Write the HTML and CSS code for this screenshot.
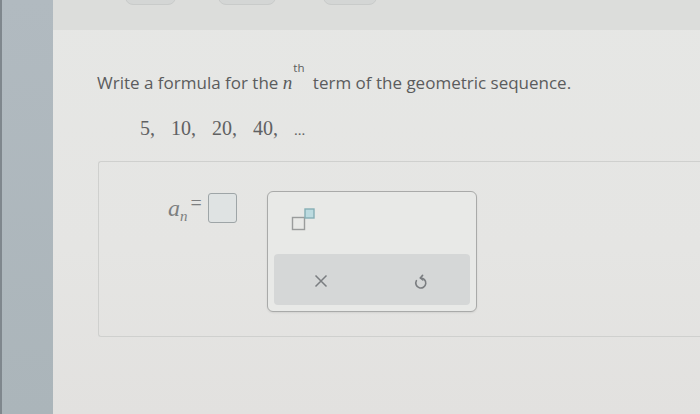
FILE: index.html
```html
<!DOCTYPE html>
<html>
<head>
<meta charset="utf-8">
<link rel="stylesheet" href="styles.css">
</head>
<body>
<div class="screen">
  <div class="side"></div>
  <div class="main">
    <div class="topbar">
      <span class="tab tab1"></span>
      <span class="tab tab2"></span>
      <span class="tab tab3"></span>
    </div>
    <div class="content">
      <p class="question">Write a formula for the <span class="var">n</span><span class="th">th</span> term of the geometric sequence.</p>
      <p class="seq">5,&nbsp; 10,&nbsp; 20,&nbsp; 40,&nbsp; <span class="dots">...</span></p>
      <div class="answer">
        <div class="formula">
          <span class="a">a</span><span class="sub">n</span><span class="eq">=</span><span class="slot"></span>
        </div>
        <div class="keypad">
          <div class="keyrow">
            <svg class="sup-icon" width="26" height="24" viewBox="0 0 26 24">
              <rect x="1.5" y="9.5" width="12" height="12" fill="none" stroke="#9a9c9c" stroke-width="1.4"/>
              <rect x="14" y="1" width="9" height="9" fill="#bcdbe0" stroke="#86aeb5" stroke-width="1.4"/>
            </svg>
          </div>
          <div class="actions">
            <svg class="icon" width="14" height="14" viewBox="0 0 14 14">
              <path d="M1.5 1.5 L12.5 12.5 M12.5 1.5 L1.5 12.5" stroke="#7a7d80" stroke-width="1.5" fill="none"/>
            </svg>
            <svg class="icon" width="14" height="18" viewBox="0 0 14 18">
              <path d="M6.5 6 A5 5 0 1 1 2.4 8.6" stroke="#7a7d80" stroke-width="1.6" fill="none" stroke-linecap="round"/>
              <path d="M8.6 3.4 L6.3 6 L8.8 8" stroke="#7a7d80" stroke-width="1.6" fill="none" stroke-linecap="round" stroke-linejoin="round"/>
            </svg>
          </div>
        </div>
      </div>
    </div>
  </div>
</div>
</body>
</html>
```

FILE: styles.css
```css
html, body {
  margin: 0;
  padding: 0;
}
body {
  width: 700px;
  height: 414px;
  overflow: hidden;
  background: #e4e4e2;
}
.screen {
  display: flex;
  width: 700px;
  height: 414px;
}
.side {
  width: 51px;
  flex: none;
  background: linear-gradient(180deg, #b1bac0 0%, #abb5ba 100%);
  border-left: 2px solid #7f878d;
}
.main {
  flex: 1;
  display: flex;
  flex-direction: column;
  background: linear-gradient(180deg, #e6e7e5 0%, #e5e5e3 60%, #e2e1df 100%);
  min-width: 0;
}
.topbar {
  height: 30px;
  flex: none;
  background: #dcdddb;
  position: relative;
}
.tab {
  position: absolute;
  top: -6px;
  height: 9px;
  border: 1px solid #c9cbca;
  border-radius: 0 0 8px 8px;
  background: #d4d6d5;
}
.tab1 { left: 72px; width: 49px; }
.tab2 { left: 165px; width: 56px; }
.tab3 { left: 270px; width: 52px; }
.content {
  padding-left: 44px;
  font-family: "Open Sans", "Liberation Sans", sans-serif;
  color: #5b5c5d;
}
.question {
  margin: 42px 0 0 0;
  font-size: 17px;
  line-height: 22px;
}
.var {
  font-family: "Liberation Serif", serif;
  font-style: italic;
  font-size: 19px;
  margin-left: 0;
}
.th {
  display: inline-block;
  font-size: 11.5px;
  line-height: 12px;
  position: relative;
  top: -17px;
  margin: 0 4px 0 1px;
}
.seq {
  margin: 22px 0 0 43px;
  font-family: "Liberation Serif", serif;
  font-size: 20px;
  line-height: 24px;
  color: #606162;
  word-spacing: 3px;
}
.dots {
  font-size: 15px;
}
.answer {
  margin: 19px 0 0 1px;
  height: 176px;
  border: 1px solid #cfd0ce;
  border-right: none;
  border-radius: 3px 0 0 3px;
  display: flex;
  align-items: flex-start;
  padding: 29px 0 0 69px;
  box-sizing: border-box;
}
.formula {
  display: flex;
  align-items: center;
  margin-top: 2px;
  font-family: "Liberation Serif", serif;
  color: #7d7f80;
}
.a {
  font-style: italic;
  font-size: 24px;
}
.sub {
  font-style: italic;
  font-size: 15px;
  align-self: flex-end;
  margin: 0;
  line-height: 14px;
}
.eq {
  font-size: 20px;
  margin: 0 6px 0 3px;
  position: relative;
  top: -5px;
}
.slot {
  width: 29px;
  height: 30px;
  box-sizing: border-box;
  border: 1.5px solid #9ea5a7;
  border-radius: 3px;
  background: #dfe3e3;
}
.keypad {
  margin-left: 30px;
  width: 210px;
  height: 121px;
  box-sizing: border-box;
  border: 1.5px solid #a9aaa9;
  border-radius: 6px;
  background: #e8e9e7;
  padding: 16px 6px 6px 6px;
  display: flex;
  flex-direction: column;
  box-shadow: 0 1px 2px rgba(0,0,0,0.08);
}
.keyrow {
  height: 46px;
  padding-left: 17px;
}
.actions {
  flex: 1;
  background: #d5d7d7;
  border-radius: 4px;
  display: flex;
  align-items: center;
  gap: 86px;
  padding: 2px 0 0 40px;
}
.icon {
  display: block;
}
```
